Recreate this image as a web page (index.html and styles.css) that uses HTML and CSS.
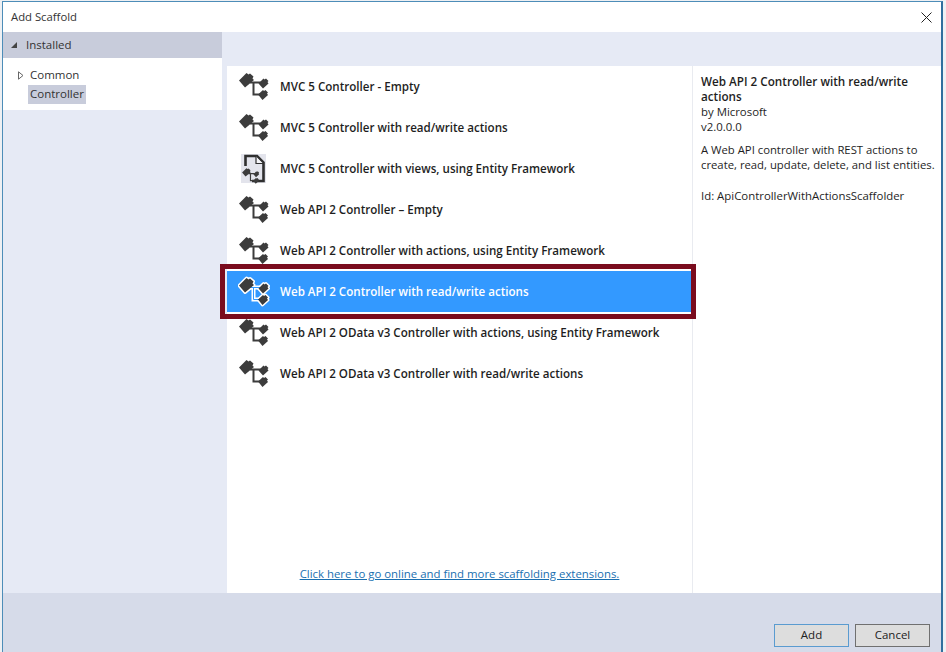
FILE: index.html
```html
<!DOCTYPE html>
<html lang="en">
<head>
<meta charset="utf-8">
<title>Add Scaffold</title>
<link rel="stylesheet" href="styles.css">
</head>
<body>
<svg class="defs" width="0" height="0" aria-hidden="true">
  <defs>
    <g id="shapes">
      <polygon points="1,9.5 8.5,2 10.5,3.5 12,2.5 15.5,5.5 14.5,7.5 16,9 7,16.5"/>
      <polygon points="20.5,12.5 25.5,7.5 26.5,8.5 28,7.5 30.5,10 29.5,11 30.5,12.5 25,17.5"/>
      <polygon points="20,23.5 25,19 26,20 27.5,19 30,21.5 29,22.5 30,24 24.5,29"/>
    </g>
    <path id="wires" d="M12 11.5H23M15.5 11.5V23.5H23" fill="none"/>
  </defs>
</svg>
<div class="window">
  <header class="titlebar">
    <span class="title">Add Scaffold</span>
    <svg class="close" width="11" height="11" viewBox="0 0 11 11"><path d="M0.5 0.5L10.5 10.5M10.5 0.5L0.5 10.5"/></svg>
  </header>
  <div class="main">
    <aside class="side">
      <div class="side-head"><span class="tri-open"></span>Installed</div>
      <div class="tree">
        <div class="tree-row"><svg class="tri-closed" width="6" height="9" viewBox="0 0 6 9"><path d="M0.5 0.8L5 4.5L0.5 8.2Z"/></svg><span class="tree-label">Common</span></div>
        <div class="tree-row"><span class="tri-none"></span><span class="tree-label is-current">Controller</span></div>
      </div>
    </aside>
    <section class="content">
      <div class="panels">
        <div class="list-pane">
          <ul class="list">
            <li class="item"><svg class="ico" width="32" height="32" viewBox="0 0 32 32"><use href="#wires" class="wire"/><use href="#shapes" class="solid"/></svg><span>MVC 5 Controller - Empty</span></li>
            <li class="item"><svg class="ico" width="32" height="32" viewBox="0 0 32 32"><use href="#wires" class="wire"/><use href="#shapes" class="solid"/></svg><span>MVC 5 Controller with read/write actions</span></li>
            <li class="item"><svg class="ico" width="32" height="32" viewBox="0 0 32 32"><rect x="3" y="1" width="25" height="29" fill="#e3e4ec"/><path d="M7.5 13V3H19L25.5 9.5V28H14" fill="none" stroke="#2f2f2f" stroke-width="2.6"/><path d="M18 3.5V10.5H25" fill="#f4f4f8" stroke="#2f2f2f" stroke-width="1.2"/><g transform="translate(3.5 14) scale(.58)"><use href="#wires" class="wire"/><use href="#shapes" class="solid"/></g></svg><span>MVC 5 Controller with views, using Entity Framework</span></li>
            <li class="item"><svg class="ico" width="32" height="32" viewBox="0 0 32 32"><use href="#wires" class="wire"/><use href="#shapes" class="solid"/></svg><span>Web API 2 Controller – Empty</span></li>
            <li class="item"><svg class="ico" width="32" height="32" viewBox="0 0 32 32"><use href="#wires" class="wire"/><use href="#shapes" class="solid"/></svg><span>Web API 2 Controller with actions, using Entity Framework</span></li>
            <li class="item is-selected"><svg class="ico" width="32" height="32" viewBox="0 0 32 32"><use href="#wires" class="wire-sel"/><use href="#shapes" class="solid-sel"/><use href="#wires" class="wire-core"/><use href="#shapes" class="solid"/></svg><span>Web API 2 Controller with read/write actions</span></li>
            <li class="item"><svg class="ico" width="32" height="32" viewBox="0 0 32 32"><use href="#wires" class="wire"/><use href="#shapes" class="solid"/></svg><span>Web API 2 OData v3 Controller with actions, using Entity Framework</span></li>
            <li class="item"><svg class="ico" width="32" height="32" viewBox="0 0 32 32"><use href="#wires" class="wire"/><use href="#shapes" class="solid"/></svg><span>Web API 2 OData v3 Controller with read/write actions</span></li>
          </ul>
          <a class="more" href="#">Click here to go online and find more scaffolding extensions.</a>
        </div>
        <div class="details">
          <h2 class="details-title">Web API 2 Controller with read/write actions</h2>
          <p class="details-text">by Microsoft</p>
          <p class="details-text">v2.0.0.0</p>
          <p class="details-text details-gap">A Web API controller with REST actions to create, read, update, delete, and list entities.</p>
          <p class="details-text details-id">Id: ApiControllerWithActionsScaffolder</p>
        </div>
      </div>
    </section>
  </div>
  <footer class="footer">
    <button class="btn btn-default" type="button">Add</button>
    <button class="btn" type="button">Cancel</button>
  </footer>
</div>
</body>
</html>
```
FILE: styles.css
```css
* { box-sizing: border-box; }
html, body { margin: 0; padding: 0; height: 652px; overflow: hidden; }
body {
  background: #eef0f3;
  padding: 1px 3px 0 2px;
  font-family: "Open Sans", "Noto Sans", sans-serif;
  font-size: 11.5px;
  color: #1e1e1e;
}
.defs { position: absolute; }
.window {
  width: 941px;
  height: 651px;
  display: flex;
  flex-direction: column;
  background: #fff;
  border: 1px solid #4d8db8;
  border-right: 2px solid #2f6f9e;
  border-bottom: 0;
}
.titlebar {
  height: 30px;
  flex: none;
  display: flex;
  align-items: center;
  justify-content: space-between;
  padding: 0 9px 2px 8px;
}
.title { font-size: 11.3px; color: #333; }
.close { stroke: #222; stroke-width: 1; fill: none; margin-top: 2px; }
.main { flex: 1; display: flex; background: #e6eaf5; min-height: 0; }
.side { width: 219px; flex: none; }
.side-head {
  height: 26px;
  background: #c8ccdb;
  display: flex;
  align-items: center;
  padding: 0 0 2px 8px;
  color: #333;
}
.tri-open {
  width: 0; height: 0;
  margin: 2px 9px 0 0;
  border-style: solid;
  border-width: 0 0 6px 6px;
  border-color: transparent transparent #444 transparent;
}
.tree { background: #fff; height: 52px; padding-top: 8px; }
.tree-row { height: 19px; display: flex; align-items: center; padding-left: 15px; }
.tri-closed {
  margin-right: 4px;
  flex: none;
  fill: #fff;
  stroke: #666;
  stroke-width: 1;
}
.tri-none { width: 10px; flex: none; }
.tree-label { padding: 0 2px 2px; line-height: 17px; color: #333; }
.is-current { background: #c8ccdb; }
.content { flex: 1; padding: 34px 0 0 5px; min-width: 0; }
.panels { height: 527px; display: flex; background: #fff; }
.list-pane {
  width: 466px;
  flex: none;
  display: flex;
  flex-direction: column;
  border-right: 1px solid #e9ebf0;
}
.list { list-style: none; margin: 0; padding: 0; flex: 1; }
.item {
  height: 41px;
  width: 465px;
  position: relative;
  display: flex;
  align-items: center;
  padding-left: 11px;
  font-size: 11.6px;
  font-weight: 600;
}
.ico { flex: none; margin-right: 10px; }
.solid { fill: #3c3c3c; }
.wire { stroke: #3c3c3c; stroke-width: 2; }
.solid-sel { fill: #fff; stroke: #fff; stroke-width: 3; stroke-linejoin: round; }
.wire-sel { stroke: #fff; stroke-width: 4; }
.wire-core { stroke: #3399ff; stroke-width: 1; }
.is-selected { background: #3399ff; color: #fff; }
.is-selected::after {
  content: "";
  position: absolute;
  inset: -7px -4px -7px -7px;
  border: 5px solid #7a0c1e;
  pointer-events: none;
}
.more {
  text-align: center;
  color: #1a6fb0;
  font-size: 11.4px;
  padding-bottom: 11px;
  line-height: 17px;
}
.details { flex: 1; padding: 8px 0 0 8px; min-width: 0; }
.details-title { margin: 0; font-size: 11.7px; line-height: 15px; font-weight: 600; padding-right: 8px; }
.details-text { margin: 0; line-height: 15px; font-size: 11.4px; }
.details-gap { margin-top: 8px; font-size: 11.3px; }
.details-id { margin-top: 16px; }
.footer {
  height: 59px;
  flex: none;
  background: #d6dbe9;
  display: flex;
  justify-content: flex-end;
  gap: 6px;
  padding: 31px 11px 0 0;
}
.btn {
  width: 75px;
  height: 23px;
  padding: 0 0 2px;
  background: #dddddd;
  border: 1px solid #707070;
  font: inherit;
  color: #222;
}
.btn-default { border-color: #5a9bd0; }
```
